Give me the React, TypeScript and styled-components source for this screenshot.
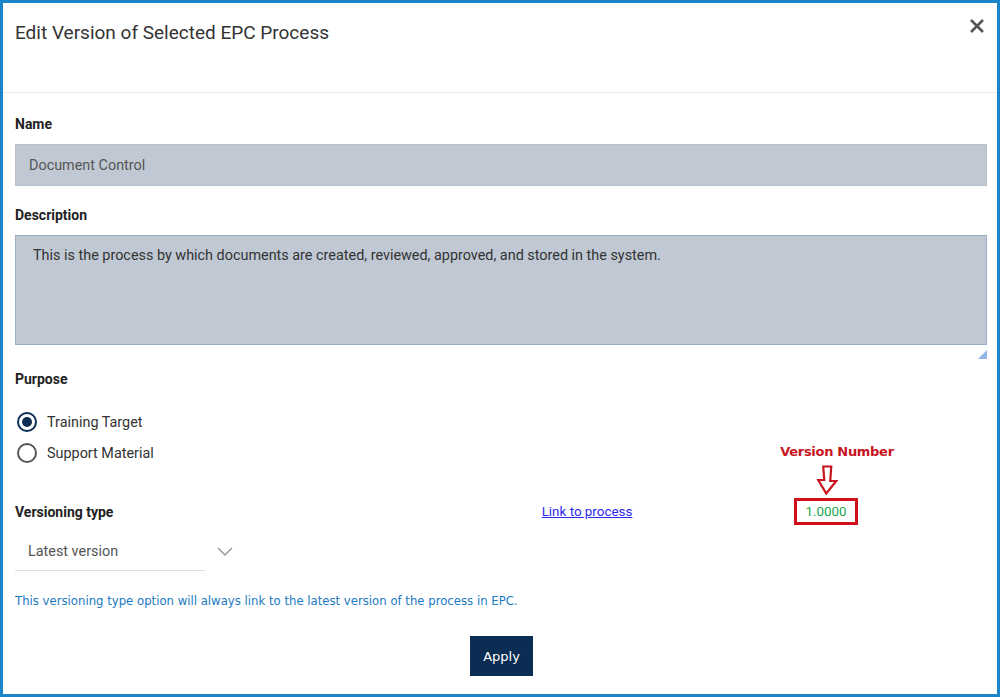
import React from "react";
import styled, { createGlobalStyle } from "styled-components";

const GlobalStyle = createGlobalStyle`
  html, body {
    margin: 0;
    padding: 0;
    background: #fff;
  }
  body {
    font-family: Roboto, "Liberation Sans", sans-serif;
    color: #222;
  }
`;

const Frame = styled.div`
  box-sizing: border-box;
  width: 1000px;
  height: 697px;
  border: 3px solid #1b85c8;
  background: #fff;
  display: flex;
  flex-direction: column;
`;

const Header = styled.div`
  height: 90px;
  border-bottom: 1px solid #eeeeee;
  display: flex;
  align-items: flex-start;
  justify-content: space-between;
  padding: 19px 10px 0 12px;
  box-sizing: border-box;
`;

const Title = styled.h2`
  margin: 0;
  font-size: 19px;
  font-weight: 400;
  color: #333;
  line-height: 22px;
`;

const CloseBtn = styled.button`
  border: none;
  background: none;
  padding: 0;
  margin-top: -6px;
  width: 20px;
  height: 20px;
  cursor: pointer;
  display: flex;
  align-items: center;
  justify-content: center;
`;

const Body = styled.div`
  padding: 21px 10px 0 12px;
  display: flex;
  flex-direction: column;
`;

const Label = styled.div<{ $gap?: number }>`
  font-size: 14px;
  font-weight: 700;
  color: #222;
  line-height: 20px;
  margin-bottom: ${(p) => p.$gap ?? 10}px;
`;

const NameInput = styled.div`
  height: 42px;
  background: #c0c9d3;
  border: 1px solid #b8c2cd;
  box-sizing: border-box;
  display: flex;
  align-items: center;
  padding-left: 13px;
  font-size: 14.4px;
  color: #555;
  margin-bottom: 19px;
`;

const TextAreaWrap = styled.div`
  display: flex;
  flex-direction: column;
  margin-bottom: 10px;
`;

const TextArea = styled.div`
  height: 110px;
  background: #c0c9d3;
  border: 1px solid #9eafc3;
  box-sizing: border-box;
  padding: 11px 17px;
  font-size: 14.4px;
  line-height: 18px;
  color: #333;
`;

const Handle = styled.div`
  display: flex;
  justify-content: flex-end;
  height: 14px;
  align-items: flex-end;
`;

const Radios = styled.div`
  display: flex;
  flex-direction: column;
  gap: 11px;
  margin-top: 23px;
  margin-bottom: 35px;
  padding-left: 2px;
`;

const RadioRow = styled.label`
  display: flex;
  align-items: center;
  gap: 10px;
  font-size: 14.4px;
  color: #333;
  height: 20px;
`;

const RadioCircle = styled.span<{ $on?: boolean }>`
  width: 20px;
  height: 20px;
  box-sizing: border-box;
  border-radius: 50%;
  border: 2px solid ${(p) => (p.$on ? "#0b2d54" : "#555")};
  display: flex;
  align-items: center;
  justify-content: center;
  &::after {
    content: "";
    width: 10px;
    height: 10px;
    border-radius: 50%;
    background: ${(p) => (p.$on ? "#0b2d54" : "transparent")};
  }
`;

const VersionRow = styled.div`
  display: grid;
  grid-template-columns: 482px 180px 1fr;
  align-items: center;
  height: 26px;
`;

const ProcessLink = styled.a`
  justify-self: center;
  font-size: 13.4px;
  color: #2a2af0;
  text-decoration: underline;
  cursor: pointer;
`;

const VersionCell = styled.div`
  position: relative;
  display: flex;
  justify-content: center;
  padding-right: 12px;
`;

const VersionBox = styled.div`
  border: 3px solid #d0111b;
  box-sizing: border-box;
  width: 64px;
  height: 27px;
  display: flex;
  align-items: center;
  justify-content: center;
  font-size: 13.4px;
  color: #1aa84c;
`;

const Annotation = styled.div`
  position: absolute;
  left: 50%;
  bottom: 30px;
  transform: translateX(-50%);
  margin-left: -5px;
  display: flex;
  flex-direction: column;
  align-items: center;
  white-space: nowrap;
`;

const AnnotationText = styled.span`
  font-family: "DejaVu Sans", "Open Sans", sans-serif;
  font-weight: 700;
  font-size: 13px;
  letter-spacing: -0.3px;
  color: #c8141e;
  line-height: 16px;
  margin-bottom: 5px;
  margin-left: 20px;
`;

const SelectBox = styled.div`
  display: flex;
  align-items: center;
  margin-top: 8px;
`;

const SelectField = styled.div`
  width: 190px;
  height: 39px;
  border-bottom: 1px solid #ddd;
  box-sizing: border-box;
  display: flex;
  align-items: center;
  padding-left: 13px;
  font-size: 14.4px;
  color: #555;
`;

const Chevron = styled.div`
  margin-left: 12px;
  display: flex;
`;

const InfoText = styled.div`
  font-family: "DejaVu Sans", Tahoma, sans-serif;
  font-size: 11.7px;
  color: #1b79bf;
  margin-top: 23px;
`;

const Footer = styled.div`
  display: flex;
  justify-content: center;
  padding-top: 28px;
`;

const ApplyBtn = styled.button`
  width: 63px;
  height: 40px;
  border: none;
  background: #0b2d54;
  color: #fff;
  font-family: "DejaVu Sans", Tahoma, sans-serif;
  font-size: 13px;
  cursor: pointer;
  margin-left: 1px;
`;

export default function App() {
  return (
    <>
      <GlobalStyle />
      <Frame>
        <Header>
          <Title>Edit Version of Selected EPC Process</Title>
          <CloseBtn aria-label="close">
            <svg width="16" height="16" viewBox="0 0 16 16">
              <path d="M2 2 L14 14 M14 2 L2 14" stroke="#555" strokeWidth="2.6" strokeLinecap="butt" />
            </svg>
          </CloseBtn>
        </Header>
        <Body>
          <Label>Name</Label>
          <NameInput>Document Control</NameInput>
          <Label>Description</Label>
          <TextAreaWrap>
            <TextArea>
              This is the process by which documents are created, reviewed, approved, and stored in the system.
            </TextArea>
            <Handle>
              <svg width="9" height="9" viewBox="0 0 9 9">
                <path d="M9 0 L9 9 L0 9 Z" fill="#8fb6e6" />
              </svg>
            </Handle>
          </TextAreaWrap>
          <Label $gap={0}>Purpose</Label>
          <Radios>
            <RadioRow>
              <RadioCircle $on />
              Training Target
            </RadioRow>
            <RadioRow>
              <RadioCircle />
              Support Material
            </RadioRow>
          </Radios>
          <VersionRow>
            <Label $gap={0}>Versioning type</Label>
            <ProcessLink>Link to process</ProcessLink>
            <VersionCell>
              <Annotation>
                <AnnotationText>Version Number</AnnotationText>
                <svg width="22" height="30" viewBox="0 0 22 30">
                  <path
                    d="M7 1.5 L15 1.5 L14 16 L20 16 L10 28.5 L2 15 L8 15 Z"
                    fill="#fff"
                    stroke="#c8141e"
                    strokeWidth="2.2"
                    strokeLinejoin="miter"
                  />
                </svg>
              </Annotation>
              <VersionBox>1.0000</VersionBox>
            </VersionCell>
          </VersionRow>
          <SelectBox>
            <SelectField>Latest version</SelectField>
            <Chevron>
              <svg width="16" height="10" viewBox="0 0 16 10">
                <path d="M1 1 L8 8 L15 1" fill="none" stroke="#999" strokeWidth="1.5" />
              </svg>
            </Chevron>
          </SelectBox>
          <InfoText>This versioning type option will always link to the latest version of the process in EPC.</InfoText>
          <Footer>
            <ApplyBtn>Apply</ApplyBtn>
          </Footer>
        </Body>
      </Frame>
    </>
  );
}
